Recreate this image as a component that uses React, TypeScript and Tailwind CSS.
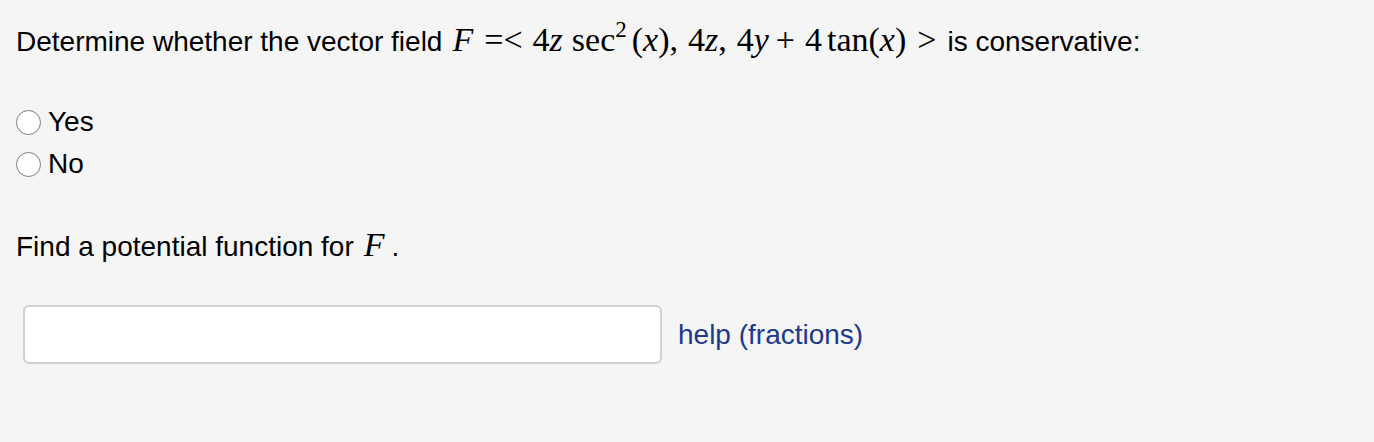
import React from 'react';

function V({ children }: { children: React.ReactNode }) {
  return <span className="italic">{children}</span>;
}

function Radio({ label }: { label: string }) {
  return (
    <label className="flex items-center gap-[7px] h-[32px]">
      <span className="w-[25px] h-[25px] rounded-full border-[1.5px] border-[#7d7d7d] bg-white" />
      <span>{label}</span>
    </label>
  );
}

export default function App() {
  return (
    <div
      className="w-[1374px] h-[442px] bg-[#f5f5f5] text-black px-4 pt-[23px] text-[28px]"
      style={{ fontFamily: '"Liberation Sans", Arial, sans-serif' }}
    >
      <p className="h-[36px] leading-[36px] whitespace-nowrap">
        Determine whether the vector field
        <span className="font-['Liberation_Serif',serif] text-[34px] leading-none">
          <span className="ml-[10px] italic">F</span>
          <span className="ml-[11px]">=&lt;</span>
          <span className="ml-[10px]">4<V>z</V></span>
          <span className="ml-[9px]">sec<sup className="text-[23px] -top-[14px]">2</sup></span>
          <span className="ml-[5px]">(<V>x</V>),</span>
          <span className="ml-[10px]">4<V>z</V>,</span>
          <span className="ml-[10px]">4<V>y</V></span>
          <span className="ml-[7px]">+</span>
          <span className="ml-[10px]">4</span>
          <span className="ml-[5px]">tan(<V>x</V>)</span>
          <span className="ml-[11px]">&gt;</span>
        </span>
        <span className="ml-[11px]">is conservative:</span>
      </p>

      <div className="mt-[47px] flex flex-col gap-[10px]">
        <Radio label="Yes" />
        <Radio label="No" />
      </div>

      <p className="mt-[48px] h-[36px] leading-[36px]">
        Find a potential function for
        <span className="ml-[10px] font-['Liberation_Serif',serif] text-[34px] leading-none italic">F</span>
        <span className="ml-[7px]">.</span>
      </p>

      <div className="mt-[41px] ml-[7px] flex items-center gap-[16px]">
        <input
          type="text"
          className="w-[639px] h-[59px] rounded-[6px] border-2 border-[#d0d0d0] bg-white outline-none"
        />
        <a href="#" className="text-[#1c3a8c]">help (fractions)</a>
      </div>
    </div>
  );
}
